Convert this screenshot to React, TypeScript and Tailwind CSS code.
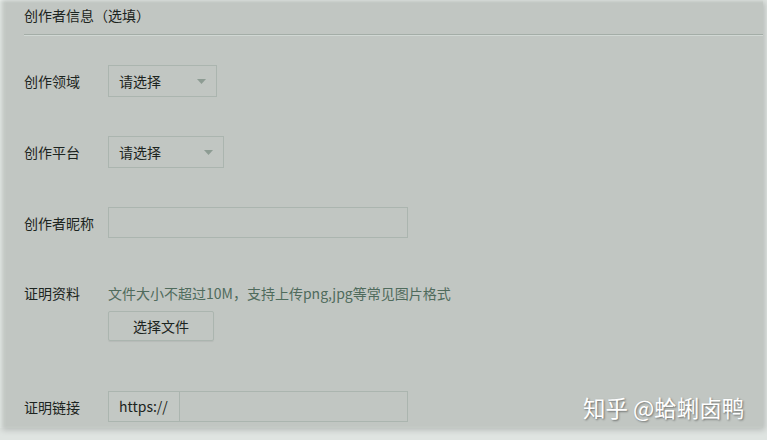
import React from "react";

const font = { fontFamily: '"Noto Sans CJK SC", "Noto Sans", sans-serif' };

function Arrow() {
  return (
    <svg width="9" height="5" viewBox="0 0 9 5" className="block">
      <path d="M0 0 L9 0 L4.5 5 Z" fill="#8d9c93" />
    </svg>
  );
}

function Select({ w }: { w: string }) {
  return (
    <div className={`${w} h-[32px] border border-[#abb5af] flex items-center justify-between pl-[10px] pr-[10px] text-[14px] text-[#1c2420]`}>
      <span>请选择</span>
      <Arrow />
    </div>
  );
}

function Label({ children }: { children: React.ReactNode }) {
  return <div className="w-[84px] shrink-0 text-[14px] text-[#1c2420] leading-[18px]">{children}</div>;
}

export default function App() {
  return (
    <div className="w-[767px] h-[440px] bg-[#dfe4e1] overflow-hidden relative" style={font}>
      <div className="w-[763px] h-[428px] bg-[#c1c6c2] shadow-[inset_4px_0_4px_-2px_rgba(240,245,242,0.7),inset_0_3px_3px_-2px_rgba(240,245,242,0.5),2px_2px_6px_rgba(0,0,0,0.18)] flex flex-col pl-[24px]">
        <div className="pt-[6px] pb-[10px] leading-[18px] text-[14px] text-[#1c2420] border-b border-[#a4ada7] shadow-[0_1px_0_rgba(220,228,224,0.6)]">
          创作者信息（选填）
        </div>

        <div className="flex items-center mt-[30px]">
          <Label>创作领域</Label>
          <Select w="w-[109px]" />
        </div>

        <div className="flex items-center mt-[39px]">
          <Label>创作平台</Label>
          <Select w="w-[116px]" />
        </div>

        <div className="flex items-center mt-[39px]">
          <Label>创作者昵称</Label>
          <div className="w-[300px] h-[31px] border border-[#abb5af]" />
        </div>

        <div className="flex items-start mt-[45px]">
          <div className="pt-[1px]">
            <Label>证明资料</Label>
          </div>
          <div className="flex flex-col">
            <div className="text-[14px] leading-[20px] text-[#4f6b5c]">文件大小不超过10M，支持上传png,jpg等常见图片格式</div>
            <div className="mt-[8px] w-[106px] h-[30px] border border-[#abb5af] rounded-[2px] flex items-center justify-center text-[14px] text-[#1c2420] shadow-[0_1px_1px_rgba(0,0,0,0.06)]">
              选择文件
            </div>
          </div>
        </div>

        <div className="flex items-center mt-[50px]">
          <Label>证明链接</Label>
          <div className="w-[300px] h-[31px] border border-[#abb5af] flex">
            <div className="w-[71px] h-full border-r border-[#abb5af] bg-[#c3c8c4] flex items-center pl-[10px] text-[14px] text-[#1c2420]">
              https://
            </div>
          </div>
        </div>
      </div>

      <div className="absolute left-[583px] top-[391px] text-[22.5px] leading-[32px] text-white [text-shadow:1px_1px_2px_rgba(0,0,0,0.45)]">
        知乎 @蛤蜊卤鸭
      </div>
    </div>
  );
}
